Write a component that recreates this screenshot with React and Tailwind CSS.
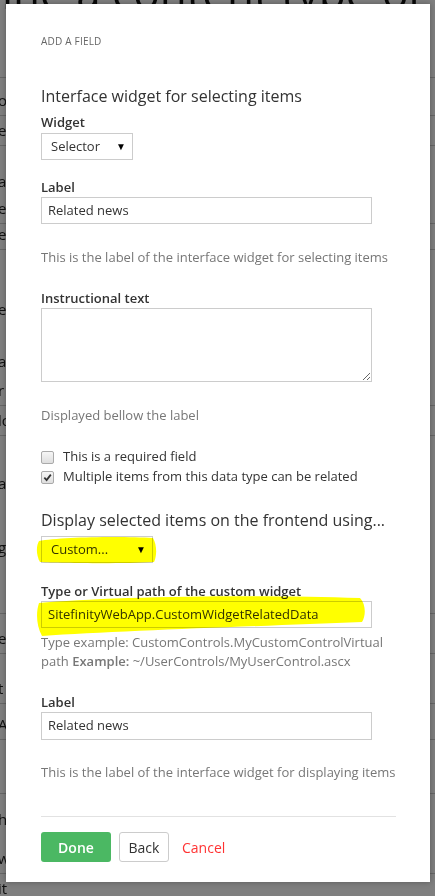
import React from "react";

const font = { fontFamily: '"Open Sans", "Liberation Sans", sans-serif' };

const backRows = [
    { h: 48, t: "", line: true },
    { h: 38, t: "or", line: true },
    { h: 30, t: "e", line: true },
    { h: 50, t: "a", line: false },
    { h: 28, t: "ev", line: true },
    { h: 26, t: "e", line: true },
    { h: 74, t: "e", line: false },
    { h: 52, t: "a", line: false },
    { h: 30, t: "r", line: true },
    { h: 30, t: "lo", line: true },
    { h: 62, t: "a", line: false },
    { h: 64, t: "g", line: false },
    { h: 52, t: "", line: true },
    { h: 40, t: "el", line: true },
    { h: 50, t: "t", line: true },
    { h: 36, t: "A", line: true },
    { h: 54, t: "", line: true },
    { h: 40, t: "h", line: false },
    { h: 40, t: "w", line: true },
    { h: 30, t: "it", line: true },
    { h: 30, t: "e", line: true },
]

const Label = ({ children, className = "" }) => (
    <div className={`text-[13px] leading-[18px] font-semibold text-[#333] ${className}`}>{children}</div>
)

const Help = ({ children, className = "" }) => (
    <div className={`text-[13px] text-[#777] ${className}`}>{children}</div>
)

const FakeSelect = ({ value, width }) => (
    <div className={`${width} h-[27px] border border-[#ccc] flex items-center justify-between pl-[9px] pr-[6px] text-[13px] text-[#333]`}>
        <span>{value}</span>
        <span className="text-[10px] text-black">▼</span>
    </div>
)

const TextInput = ({ value, className = "" }) => (
    <div className={`w-[331px] border border-[#ccc] flex items-center pl-[6px] text-[13px] text-[#333] ${className}`}>{value}</div>
)

const Check = ({ checked, children }) => (
    <div className="flex items-center h-[20px]">
        <div className="w-[13px] h-[13px] rounded-[2px] border border-[#aaa] bg-gradient-to-b from-[#f6f6f6] to-[#dedede] flex items-center justify-center">
            {checked && (
                <svg width="9" height="9" viewBox="0 0 10 10">
                    <path d="M1.5 5.2 L4 7.8 L8.7 1.8" fill="none" stroke="#333" strokeWidth="2" />
                </svg>
            )}
        </div>
        <span className="ml-[9px] text-[13px] text-[#333]">{children}</span>
    </div>
)

const App = () => {
    return (
        <div className="relative w-[435px] h-[896px] overflow-hidden bg-white" style={font}>
            {/* page behind the dialog */}
            <div className="text-[44px] leading-none text-[#111] whitespace-nowrap -mt-[30px] pl-[2px]">ine a content type or /as/</div>
            <div className="mt-[16px]">
                {backRows.map((r, i) => (
                    <div key={i} className={`flex items-end pb-[4px] text-[15px] text-[#222] ${r.line ? "border-b border-[#ccc]" : ""}`} style={{ height: r.h }}>
                        <span className="-ml-[2px]">{r.t}</span>
                    </div>
                ))}
            </div>
            <div className="absolute inset-0 bg-black/50"></div>

            {/* dialog */}
            <div className="absolute left-[6px] top-[4px] w-[424px] h-[878px] bg-white shadow-[0_0_6px_rgba(0,0,0,0.3)] pl-[35px] pr-[34px] pt-[30px]">
                <div className="text-[10px] leading-[14px] text-[#666] tracking-[0.2px]">ADD A FIELD</div>
                <div className="mt-[36px] text-[16px] leading-[24px] text-[#333]">Interface widget for selecting items</div>

                <Label className="mt-[5px]">Widget</Label>
                <div className="mt-[2px]"><FakeSelect value="Selector" width="w-[92px]" /></div>

                <Label className="mt-[18px]">Label</Label>
                <TextInput value="Related news" className="mt-[1px] h-[27px]" />
                <Help className="mt-[24px] leading-[18px]">This is the label of the interface widget for selecting items</Help>

                <Label className="mt-[23px]">Instructional text</Label>
                <textarea className="mt-[1px] block w-[331px] h-[74px] border border-[#ccc] outline-none" />
                <Help className="mt-[24px] leading-[18px]">Displayed bellow the label</Help>

                <div className="mt-[23px]">
                    <Check>This is a required field</Check>
                    <Check checked>Multiple items from this data type can be related</Check>
                </div>

                <div className="mt-[21px] text-[16px] leading-[24px] text-[#333] whitespace-nowrap">Display selected items on the frontend using...</div>
                <div className="mt-[4px]"><FakeSelect value="Custom..." width="w-[112px]" /></div>

                <Label className="mt-[19px]">Type or Virtual path of the custom widget</Label>
                <TextInput value="SitefinityWebApp.CustomWidgetRelatedData" className="mt-[1px] h-[27px]" />
                <Help className="mt-[5px] leading-[19px]">
                    Type example: CustomControls.MyCustomControlVirtual path <span className="font-semibold">Example:</span> ~/UserControls/MyUserControl.ascx
                </Help>

                <Label className="mt-[22px]">Label</Label>
                <TextInput value="Related news" className="mt-[1px] h-[28px]" />
                <Help className="mt-[23px] leading-[18px]">This is the label of the interface widget for displaying items</Help>

                <div className="mt-[35px] border-t border-[#e2e2e2]"></div>

                <div className="mt-[15px] flex items-center">
                    <button className="w-[70px] h-[30px] rounded-[3px] bg-[#4bb863] text-white text-[14px] font-semibold">Done</button>
                    <button className="ml-[8px] w-[50px] h-[30px] rounded-[3px] border border-[#ccc] bg-white text-[#333] text-[14px]">Back</button>
                    <span className="ml-[13px] text-[14px] text-[#ff3333]">Cancel</span>
                </div>
            </div>

            {/* marker highlights drawn over the screenshot */}
            <svg className="absolute inset-0 pointer-events-none mix-blend-multiply" width="435" height="896">
                <path d="M39 541 C 60 537, 120 536, 153 538 C 157 545, 157 556, 154 562 C 120 564, 60 563, 40 562 C 36 555, 36 546, 39 541 Z" fill="#ffff00" />
                <path d="M39 603 C 100 597, 250 594, 360 598 C 366 604, 366 616, 362 622 C 260 626, 120 631, 42 636 C 36 625, 36 612, 39 603 Z" fill="#ffff00" />
            </svg>
        </div>
    )
}

export default App;
